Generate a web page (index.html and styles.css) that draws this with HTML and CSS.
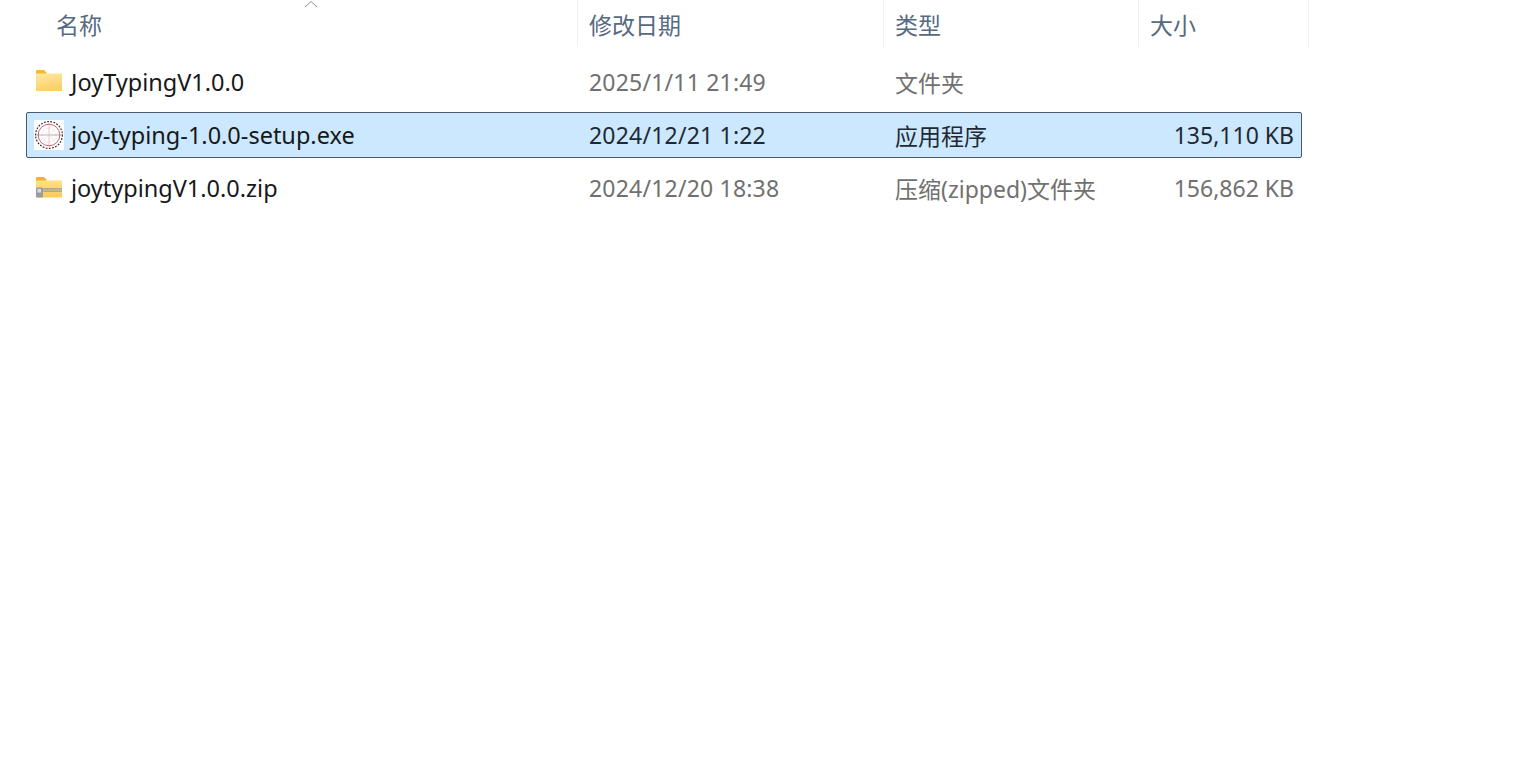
FILE: index.html
```html
<!DOCTYPE html>
<html lang="zh-CN">
<head>
    <meta charset="UTF-8">
    <title>文件列表</title>
    <link rel="stylesheet" href="styles.css">
</head>
<body>
    <div class="header">
        <div class="col col-name">名称
            <svg class="sort-arrow" width="16" height="8" viewBox="0 0 16 8"><path d="M2 7L8 1.5L14 7" fill="none" stroke="#8a8f96" stroke-width="1"/></svg>
        </div>
        <div class="col col-date">修改日期</div>
        <div class="col col-type">类型</div>
        <div class="col col-size">大小</div>
    </div>

    <div class="list">
        <div class="row">
            <div class="cell-name">
                <svg class="icon" width="30" height="30" viewBox="0 0 30 30">
                    <defs>
                        <linearGradient id="folder" x1="0" y1="0" x2="0.3" y2="1">
                            <stop offset="0" stop-color="#ffe9a3"/>
                            <stop offset="1" stop-color="#fdcf68"/>
                        </linearGradient>
                    </defs>
                    <path d="M2 4.2C2 3.5 2.5 3 3.2 3H10L12.5 5.5V9H2Z" fill="#f5b93a"/>
                    <rect x="2" y="6.5" width="26" height="17.5" rx="0.5" fill="url(#folder)"/>
                </svg>
                <span class="file-name">JoyTypingV1.0.0</span>
            </div>
            <div class="cell-date">2025/1/11 21:49</div>
            <div class="cell-type">文件夹</div>
            <div class="cell-size"></div>
        </div>

        <div class="row selected">
            <div class="cell-name">
                <svg class="icon" width="30" height="30" viewBox="0 0 30 30">
                    <rect width="30" height="30" fill="#fff"/>
                    <circle cx="15" cy="15" r="13.4" fill="none" stroke="#222" stroke-width="1.1" stroke-dasharray="1.8 1.4"/>
                    <circle cx="15" cy="15" r="10.8" fill="none" stroke="#c9505e" stroke-width="0.9"/>
                    <circle cx="15" cy="15" r="7" fill="none" stroke="#e3c3c7" stroke-width="0.6" stroke-dasharray="1.5 1.5"/>
                    <path d="M1 15H29" stroke="#666" stroke-width="0.5"/>
                    <path d="M15 3V27" stroke="#d08a96" stroke-width="0.5"/>
                    <path d="M9 9L21 21M21 9L9 21" stroke="#d4d4d4" stroke-width="0.4"/>
                </svg>
                <span class="file-name">joy-typing-1.0.0-setup.exe</span>
            </div>
            <div class="cell-date">2024/12/21 1:22</div>
            <div class="cell-type">应用程序</div>
            <div class="cell-size">135,110 KB</div>
        </div>

        <div class="row">
            <div class="cell-name">
                <svg class="icon" width="30" height="30" viewBox="0 0 30 30">
                    <defs>
                        <linearGradient id="zip" x1="0" y1="0" x2="0" y2="1">
                            <stop offset="0" stop-color="#ffe08a"/>
                            <stop offset="1" stop-color="#fbc957"/>
                        </linearGradient>
                    </defs>
                    <path d="M2 5.2C2 4.5 2.5 4 3.2 4H10L12.5 6.5V10H2Z" fill="#f5b32e"/>
                    <rect x="2" y="7.5" width="26" height="17" rx="0.5" fill="url(#zip)"/>
                    <rect x="7" y="15" width="21" height="4" fill="#b3aa84"/>
                    <path d="M7 17H28" stroke="#ebe5c8" stroke-width="0.9" stroke-dasharray="1.2 1.2"/>
                    <rect x="2" y="14.5" width="7" height="10" rx="1.5" fill="#9a9c9f"/>
                    <rect x="3.5" y="16" width="3.5" height="3.5" fill="#dcdcdc"/>
                </svg>
                <span class="file-name">joytypingV1.0.0.zip</span>
            </div>
            <div class="cell-date">2024/12/20 18:38</div>
            <div class="cell-type">压缩(zipped)文件夹</div>
            <div class="cell-size">156,862 KB</div>
        </div>
    </div>
</body>
</html>
```

FILE: styles.css
```css
body {
    margin: 0;
    background: #fff;
    font-family: "Noto Sans", "Noto Sans CJK SC", sans-serif;
    font-size: 23px;
    color: #707070;
    overflow: hidden;
}

.header {
    display: grid;
    grid-template-columns: 578px 306px 255px 170px;
    height: 47px;
}

.col {
    position: relative;
    display: flex;
    align-items: center;
    height: 47px;
    padding-left: 11px;
    border-right: 1px solid #eef0f2;
    color: #566a82;
    box-sizing: border-box;
}

.col-name {
    padding-left: 56px;
}

.sort-arrow {
    position: absolute;
    left: 303px;
    top: 0;
}

.list {
    width: 1276px;
    margin-left: 26px;
    padding-top: 12px;
}

.row {
    display: grid;
    grid-template-columns: 552px 306px 1fr 170px;
    align-items: center;
    height: 46px;
    margin-bottom: 7px;
    border: 1px solid transparent;
    border-radius: 2px;
    box-sizing: border-box;
}

.selected {
    background: #cce8ff;
    border-color: #4a5a6c;
    color: #1f2933;
}

.cell-name {
    display: flex;
    align-items: center;
    gap: 7px;
    padding-left: 7px;
    color: #16181a;
}

.file-name {
    font-size: 23.5px;
}

.cell-date {
    padding-left: 10px;
    letter-spacing: 0.2px;
}

.cell-type {
    padding-left: 10px;
}

.cell-size {
    text-align: right;
    padding-right: 7px;
}

.icon {
    flex: none;
}
```
